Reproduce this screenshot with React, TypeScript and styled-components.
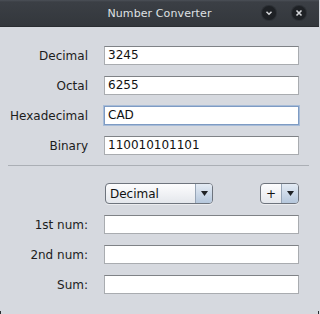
import React from "react";
import styled, { createGlobalStyle } from "styled-components";

const Global = createGlobalStyle`
  html, body { margin: 0; padding: 0; background: #d6d9df; }
  * { box-sizing: border-box; }
`;

const Window = styled.div`
  position: relative;
  width: 319px;
  height: 314px;
  background: #d6d9df;
  font-family: "DejaVu Sans", "Liberation Sans", sans-serif;
  display: flex;
  flex-direction: column;
  overflow: hidden;
  &::before, &::after {
    content: "";
    position: absolute;
    bottom: 0;
    width: 1px;
    height: 3px;
    background: #2a2d31;
  }
  &::before { left: 0; }
  &::after { right: 0; }
`;

const TitleBar = styled.div`
  position: relative;
  height: 27px;
  flex: none;
  background: linear-gradient(#4b5057 0px, #3b3f45 2px, #33373c 100%);
  border-bottom: 1px solid #2a2d31;
  display: flex;
  align-items: center;
  justify-content: center;
`;

const Title = styled.div`
  color: #dfe1e4;
  font-size: 11px;
  letter-spacing: 0.1px;
  margin-top: 1px;
`;

const TitleButtons = styled.div`
  position: absolute;
  right: 13px;
  top: 6px;
  display: flex;
  gap: 16px;
`;

const CircleBtn = styled.div`
  width: 14px;
  height: 14px;
  border-radius: 50%;
  background: #1e2125;
  box-shadow: 0 0 0 1px #2c3035;
  display: flex;
  align-items: center;
  justify-content: center;
`;

const Form = styled.div`
  display: flex;
  flex-direction: column;
  padding: 19px 20px 0 0;
`;

const Row = styled.div<{ $gap?: number }>`
  display: flex;
  align-items: center;
  height: 19px;
  margin-bottom: ${(p) => p.$gap ?? 11}px;
`;

const Label = styled.div`
  width: 88px;
  text-align: right;
  font-size: 12px;
  color: #1c1c1c;
  margin-right: 16px;
  flex: none;
`;

const Input = styled.div<{ $focused?: boolean }>`
  width: 195px;
  height: 19px;
  background: #ffffff;
  border: 1px solid #a9acb0;
  border-top-color: #7f8286;
  font-size: 12px;
  color: #111;
  padding-left: 3px;
  line-height: 17px;
  ${(p) =>
    p.$focused &&
    `border-color: #7e9bc3; box-shadow: 0 0 0 1px #a7bcd8;`}
`;

const Separator = styled.div`
  height: 1px;
  background: #abafb5;
  margin: 0 0 17px 8px;
  width: 301px;
`;

const ComboRow = styled.div`
  display: flex;
  align-items: center;
  height: 21px;
  margin: 0 0 11px 105px;
`;

const Combo = styled.div<{ $width: number }>`
  width: ${(p) => p.$width}px;
  height: 21px;
  border: 1px solid #6e747d;
  border-radius: 4px;
  background: linear-gradient(#fdfdfe, #e4e7ec);
  display: flex;
  align-items: stretch;
  overflow: hidden;
  box-shadow: 0 1px 0 rgba(255, 255, 255, 0.5);
`;

const ComboText = styled.div<{ $center?: boolean }>`
  flex: 1;
  font-size: 12px;
  color: #111;
  display: flex;
  align-items: center;
  padding-left: ${(p) => (p.$center ? 0 : 4)}px;
  justify-content: ${(p) => (p.$center ? "center" : "flex-start")};
`;

const ComboArrow = styled.div`
  width: 17px;
  flex: none;
  border-left: 1px solid #97a5b6;
  background: linear-gradient(#e4ebf4, #b5c7dc);
  display: flex;
  align-items: center;
  justify-content: center;
`;

const Spacer = styled.div`
  flex: 1;
`;

const Arrow = () => (
  <svg width="7" height="5" viewBox="0 0 7 5">
    <path d="M0 0 L7 0 L3.5 5 Z" fill="#1f2226" />
  </svg>
);

export default function App() {
  return (
    <>
      <Global />
      <Window>
        <TitleBar>
          <Title>Number Converter</Title>
          <TitleButtons>
            <CircleBtn>
              <svg width="8" height="8" viewBox="0 0 8 8">
                <path d="M1.5 2.8 L4 5.2 L6.5 2.8" stroke="#d4d6d9" strokeWidth="1.5" fill="none" />
              </svg>
            </CircleBtn>
            <CircleBtn>
              <svg width="8" height="8" viewBox="0 0 8 8">
                <path d="M1.5 1.5 L6.5 6.5 M6.5 1.5 L1.5 6.5" stroke="#d4d6d9" strokeWidth="1.6" fill="none" />
              </svg>
            </CircleBtn>
          </TitleButtons>
        </TitleBar>
        <Form>
          <Row>
            <Label>Decimal</Label>
            <Input>3245</Input>
          </Row>
          <Row>
            <Label>Octal</Label>
            <Input>6255</Input>
          </Row>
          <Row>
            <Label>Hexadecimal</Label>
            <Input $focused>CAD</Input>
          </Row>
          <Row $gap={10}>
            <Label>Binary</Label>
            <Input>110010101101</Input>
          </Row>
          <Separator />
          <ComboRow>
            <Combo $width={108}>
              <ComboText>Decimal</ComboText>
              <ComboArrow>
                <Arrow />
              </ComboArrow>
            </Combo>
            <Spacer />
            <Combo $width={39}>
              <ComboText $center>+</ComboText>
              <ComboArrow>
                <Arrow />
              </ComboArrow>
            </Combo>
          </ComboRow>
          <Row>
            <Label>1st num:</Label>
            <Input />
          </Row>
          <Row>
            <Label>2nd num:</Label>
            <Input />
          </Row>
          <Row>
            <Label>Sum:</Label>
            <Input />
          </Row>
        </Form>
      </Window>
    </>
  );
}
